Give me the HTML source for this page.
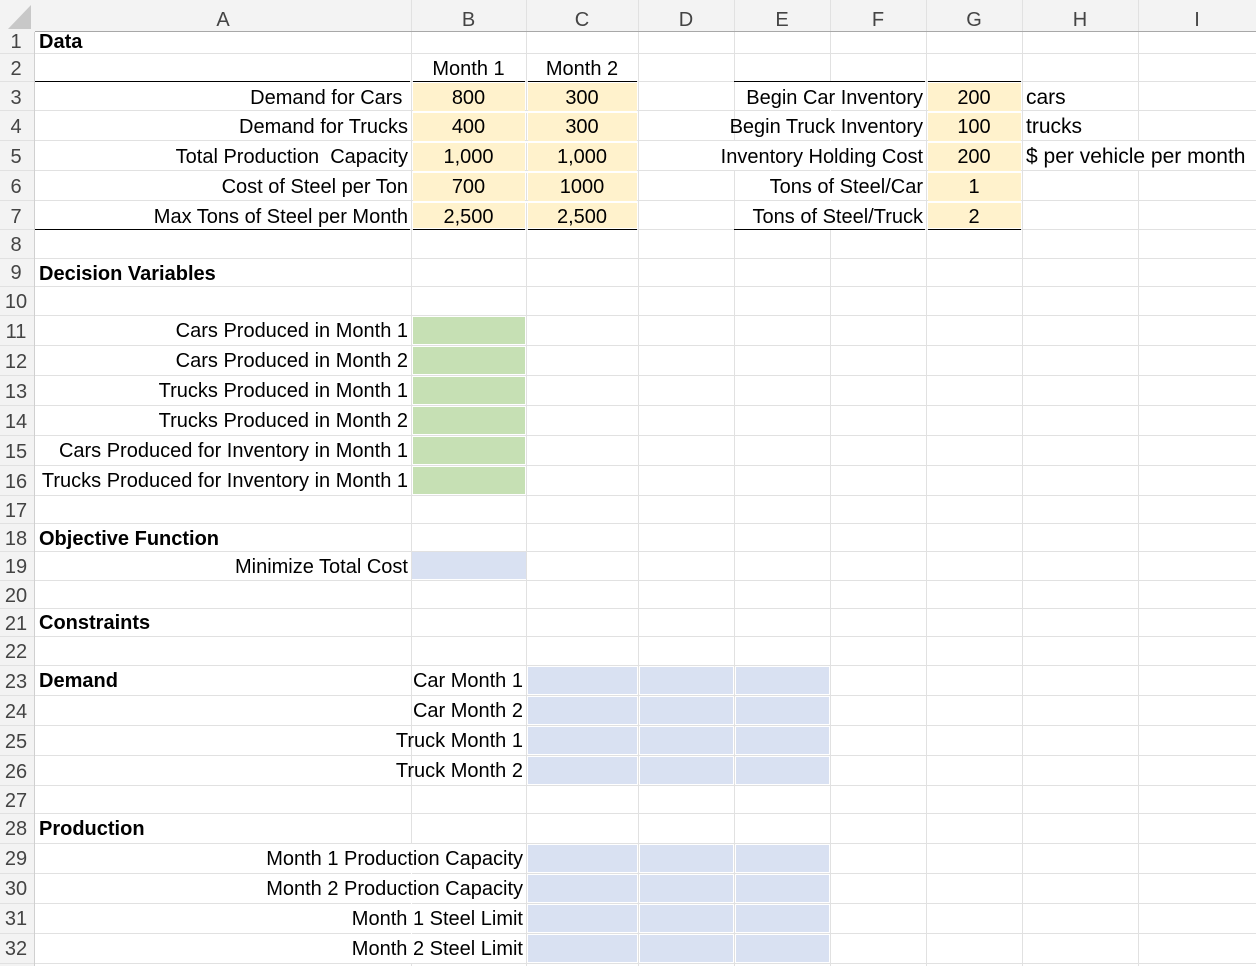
<!DOCTYPE html>
<html><head><meta charset="utf-8"><style>
*{margin:0;padding:0;box-sizing:border-box}
body{width:1256px;height:966px;overflow:hidden;background:#fff;font-family:"Liberation Sans",Arial,sans-serif;font-size:20px;color:#000;position:relative}
.c{position:absolute;white-space:nowrap;overflow:visible;padding-top:2px}
.r{text-align:right;padding-right:3px}
.m{text-align:center}
.l{padding-left:4px}
.b{font-weight:bold}
.f{position:absolute}
.y{background:#FFF2CC}.g{background:#C6E0B4}.u{background:#D9E1F2}
.k{position:absolute;height:1px;background:#000}
.w{position:absolute;width:1px;background:#fff}
.hd{position:absolute;color:#444;text-align:center;font-size:20px}
</style></head><body>
<svg width="1256" height="966" style="position:absolute;left:0;top:0">
<rect x="0" y="0" width="1256" height="32" fill="#F3F3F3"/>
<rect x="0" y="0" width="35" height="966" fill="#F3F3F3"/>
<polygon points="31,5 31,29 8,29" fill="#C8C8C8"/>
<g stroke="#E1E1E1" stroke-width="1">
<line x1="411.5" y1="0" x2="411.5" y2="966"/><line x1="526.5" y1="0" x2="526.5" y2="966"/><line x1="638.5" y1="0" x2="638.5" y2="966"/><line x1="734.5" y1="0" x2="734.5" y2="966"/><line x1="830.5" y1="0" x2="830.5" y2="966"/><line x1="926.5" y1="0" x2="926.5" y2="966"/><line x1="1022.5" y1="0" x2="1022.5" y2="966"/><line x1="1138.5" y1="0" x2="1138.5" y2="966"/>
<line x1="0" y1="53.5" x2="1256" y2="53.5"/><line x1="0" y1="81.5" x2="1256" y2="81.5"/><line x1="0" y1="110.5" x2="1256" y2="110.5"/><line x1="0" y1="140.5" x2="1256" y2="140.5"/><line x1="0" y1="170.5" x2="1256" y2="170.5"/><line x1="0" y1="200.5" x2="1256" y2="200.5"/><line x1="0" y1="229.5" x2="1256" y2="229.5"/><line x1="0" y1="258.5" x2="1256" y2="258.5"/><line x1="0" y1="286.5" x2="1256" y2="286.5"/><line x1="0" y1="315.5" x2="1256" y2="315.5"/><line x1="0" y1="345.5" x2="1256" y2="345.5"/><line x1="0" y1="375.5" x2="1256" y2="375.5"/><line x1="0" y1="405.5" x2="1256" y2="405.5"/><line x1="0" y1="435.5" x2="1256" y2="435.5"/><line x1="0" y1="465.5" x2="1256" y2="465.5"/><line x1="0" y1="495.5" x2="1256" y2="495.5"/><line x1="0" y1="523.5" x2="1256" y2="523.5"/><line x1="0" y1="551.5" x2="1256" y2="551.5"/><line x1="0" y1="580.5" x2="1256" y2="580.5"/><line x1="0" y1="608.5" x2="1256" y2="608.5"/><line x1="0" y1="636.5" x2="1256" y2="636.5"/><line x1="0" y1="665.5" x2="1256" y2="665.5"/><line x1="0" y1="695.5" x2="1256" y2="695.5"/><line x1="0" y1="725.5" x2="1256" y2="725.5"/><line x1="0" y1="755.5" x2="1256" y2="755.5"/><line x1="0" y1="785.5" x2="1256" y2="785.5"/><line x1="0" y1="813.5" x2="1256" y2="813.5"/><line x1="0" y1="843.5" x2="1256" y2="843.5"/><line x1="0" y1="873.5" x2="1256" y2="873.5"/><line x1="0" y1="903.5" x2="1256" y2="903.5"/><line x1="0" y1="933.5" x2="1256" y2="933.5"/><line x1="0" y1="963.5" x2="1256" y2="963.5"/>
</g>
<line x1="35" y1="31.5" x2="1256" y2="31.5" stroke="#A8A8A8"/>
<line x1="34.5" y1="32" x2="34.5" y2="966" stroke="#D0D0D0"/>
</svg>
<!-- gridline covers for overflowing text -->
<div class="w" style="left:830px;top:82px;height:147px"></div>
<div class="w" style="left:734px;top:141px;height:29px"></div>
<div class="w" style="left:1138px;top:141px;height:29px"></div>
<div class="w" style="left:411px;top:844px;height:119px"></div>
<!-- headers -->
<div class="hd" style="left:35px;width:376px;top:9px">A</div>
<div class="hd" style="left:411px;width:115px;top:9px">B</div>
<div class="hd" style="left:526px;width:112px;top:9px">C</div>
<div class="hd" style="left:638px;width:96px;top:9px">D</div>
<div class="hd" style="left:734px;width:96px;top:9px">E</div>
<div class="hd" style="left:830px;width:96px;top:9px">F</div>
<div class="hd" style="left:926px;width:96px;top:9px">G</div>
<div class="hd" style="left:1022px;width:116px;top:9px">H</div>
<div class="hd" style="left:1138px;width:118px;top:9px">I</div>
<div class="hd" style="left:0;width:32px;top:31px">1</div>
<div class="hd" style="left:0;width:32px;top:58px">2</div>
<div class="hd" style="left:0;width:32px;top:87px">3</div>
<div class="hd" style="left:0;width:32px;top:116px">4</div>
<div class="hd" style="left:0;width:32px;top:146px">5</div>
<div class="hd" style="left:0;width:32px;top:176px">6</div>
<div class="hd" style="left:0;width:32px;top:206px">7</div>
<div class="hd" style="left:0;width:32px;top:234px">8</div>
<div class="hd" style="left:0;width:32px;top:262px">9</div>
<div class="hd" style="left:0;width:32px;top:291px">10</div>
<div class="hd" style="left:0;width:32px;top:321px">11</div>
<div class="hd" style="left:0;width:32px;top:351px">12</div>
<div class="hd" style="left:0;width:32px;top:381px">13</div>
<div class="hd" style="left:0;width:32px;top:411px">14</div>
<div class="hd" style="left:0;width:32px;top:441px">15</div>
<div class="hd" style="left:0;width:32px;top:471px">16</div>
<div class="hd" style="left:0;width:32px;top:500px">17</div>
<div class="hd" style="left:0;width:32px;top:528px">18</div>
<div class="hd" style="left:0;width:32px;top:556px">19</div>
<div class="hd" style="left:0;width:32px;top:585px">20</div>
<div class="hd" style="left:0;width:32px;top:613px">21</div>
<div class="hd" style="left:0;width:32px;top:641px">22</div>
<div class="hd" style="left:0;width:32px;top:671px">23</div>
<div class="hd" style="left:0;width:32px;top:701px">24</div>
<div class="hd" style="left:0;width:32px;top:731px">25</div>
<div class="hd" style="left:0;width:32px;top:761px">26</div>
<div class="hd" style="left:0;width:32px;top:790px">27</div>
<div class="hd" style="left:0;width:32px;top:818px">28</div>
<div class="hd" style="left:0;width:32px;top:848px">29</div>
<div class="hd" style="left:0;width:32px;top:878px">30</div>
<div class="hd" style="left:0;width:32px;top:908px">31</div>
<div class="hd" style="left:0;width:32px;top:938px">32</div>
<!-- fills -->
<div class="f y" style="left:413px;top:83px;width:112px;height:145px"></div>
<div class="f y" style="left:528px;top:83px;width:109px;height:145px"></div>
<div class="f y" style="left:928px;top:83px;width:93px;height:145px"></div>
<div class="f" style="left:413px;top:111px;width:224px;height:2px;background:#fff"></div>
<div class="f" style="left:413px;top:141px;width:224px;height:2px;background:#fff"></div>
<div class="f" style="left:413px;top:171px;width:224px;height:2px;background:#fff"></div>
<div class="f" style="left:413px;top:201px;width:224px;height:2px;background:#fff"></div>
<div class="f" style="left:928px;top:111px;width:93px;height:2px;background:#fff"></div>
<div class="f" style="left:928px;top:141px;width:93px;height:2px;background:#fff"></div>
<div class="f" style="left:928px;top:171px;width:93px;height:2px;background:#fff"></div>
<div class="f" style="left:928px;top:201px;width:93px;height:2px;background:#fff"></div>
<div class="f g" style="left:413px;top:317px;width:112px;height:27px"></div>
<div class="f g" style="left:413px;top:347px;width:112px;height:27px"></div>
<div class="f g" style="left:413px;top:377px;width:112px;height:27px"></div>
<div class="f g" style="left:413px;top:407px;width:112px;height:27px"></div>
<div class="f g" style="left:413px;top:437px;width:112px;height:27px"></div>
<div class="f g" style="left:413px;top:467px;width:112px;height:27px"></div>
<div class="f u" style="left:412px;top:552px;width:114px;height:27px"></div>
<div class="f u" style="left:528px;top:667px;width:109px;height:27px"></div><div class="f u" style="left:640px;top:667px;width:93px;height:27px"></div><div class="f u" style="left:736px;top:667px;width:93px;height:27px"></div>
<div class="f u" style="left:528px;top:697px;width:109px;height:27px"></div><div class="f u" style="left:640px;top:697px;width:93px;height:27px"></div><div class="f u" style="left:736px;top:697px;width:93px;height:27px"></div>
<div class="f u" style="left:528px;top:727px;width:109px;height:27px"></div><div class="f u" style="left:640px;top:727px;width:93px;height:27px"></div><div class="f u" style="left:736px;top:727px;width:93px;height:27px"></div>
<div class="f u" style="left:528px;top:757px;width:109px;height:27px"></div><div class="f u" style="left:640px;top:757px;width:93px;height:27px"></div><div class="f u" style="left:736px;top:757px;width:93px;height:27px"></div>
<div class="f u" style="left:528px;top:845px;width:109px;height:27px"></div><div class="f u" style="left:640px;top:845px;width:93px;height:27px"></div><div class="f u" style="left:736px;top:845px;width:93px;height:27px"></div>
<div class="f u" style="left:528px;top:875px;width:109px;height:27px"></div><div class="f u" style="left:640px;top:875px;width:93px;height:27px"></div><div class="f u" style="left:736px;top:875px;width:93px;height:27px"></div>
<div class="f u" style="left:528px;top:905px;width:109px;height:27px"></div><div class="f u" style="left:640px;top:905px;width:93px;height:27px"></div><div class="f u" style="left:736px;top:905px;width:93px;height:27px"></div>
<div class="f u" style="left:528px;top:935px;width:109px;height:27px"></div><div class="f u" style="left:640px;top:935px;width:93px;height:27px"></div><div class="f u" style="left:736px;top:935px;width:93px;height:27px"></div>
<!-- black borders -->
<div class="k" style="left:35px;top:81px;width:375px"></div>
<div class="k" style="left:413px;top:81px;width:112px"></div>
<div class="k" style="left:528px;top:81px;width:109px"></div>
<div class="k" style="left:35px;top:229px;width:375px"></div>
<div class="k" style="left:413px;top:229px;width:112px"></div>
<div class="k" style="left:528px;top:229px;width:109px"></div>
<div class="k" style="left:734px;top:81px;width:191px"></div>
<div class="k" style="left:928px;top:81px;width:93px"></div>
<div class="k" style="left:734px;top:229px;width:191px"></div>
<div class="k" style="left:928px;top:229px;width:93px"></div>
<!-- text -->
<div class="c l b" style="left:35px;top:29px">Data</div>
<div class="c m" style="left:411px;width:115px;top:56px">Month 1</div>
<div class="c m" style="left:526px;width:112px;top:56px">Month 2</div>
<div class="c r" style="left:35px;width:376px;top:85px">Demand for Cars&nbsp;</div>
<div class="c r" style="left:35px;width:376px;top:114px">Demand for Trucks</div>
<div class="c r" style="left:35px;width:376px;top:144px">Total Production&nbsp; Capacity</div>
<div class="c r" style="left:35px;width:376px;top:174px">Cost of Steel per Ton</div>
<div class="c r" style="left:35px;width:376px;top:204px">Max Tons of Steel per Month</div>
<div class="c m" style="left:411px;width:115px;top:85px">800</div>
<div class="c m" style="left:411px;width:115px;top:114px">400</div>
<div class="c m" style="left:411px;width:115px;top:144px">1,000</div>
<div class="c m" style="left:411px;width:115px;top:174px">700</div>
<div class="c m" style="left:411px;width:115px;top:204px">2,500</div>
<div class="c m" style="left:526px;width:112px;top:85px">300</div>
<div class="c m" style="left:526px;width:112px;top:114px">300</div>
<div class="c m" style="left:526px;width:112px;top:144px">1,000</div>
<div class="c m" style="left:526px;width:112px;top:174px">1000</div>
<div class="c m" style="left:526px;width:112px;top:204px">2,500</div>
<div class="c r" style="left:626px;width:300px;top:85px">Begin Car Inventory</div>
<div class="c r" style="left:626px;width:300px;top:114px">Begin Truck Inventory</div>
<div class="c r" style="left:626px;width:300px;top:144px">Inventory Holding Cost</div>
<div class="c r" style="left:626px;width:300px;top:174px">Tons of Steel/Car</div>
<div class="c r" style="left:626px;width:300px;top:204px">Tons of Steel/Truck</div>
<div class="c m" style="left:926px;width:96px;top:85px">200</div>
<div class="c m" style="left:926px;width:96px;top:114px">100</div>
<div class="c m" style="left:926px;width:96px;top:144px">200</div>
<div class="c m" style="left:926px;width:96px;top:174px">1</div>
<div class="c m" style="left:926px;width:96px;top:204px">2</div>
<div class="c l" style="left:1022px;top:84px;font-size:21px">cars</div>
<div class="c l" style="left:1022px;top:113px;font-size:21px">trucks</div>
<div class="c l" style="left:1022px;top:143px;font-size:21px">$ per vehicle per month</div>
<div class="c l b" style="left:35px;top:261px">Decision Variables</div>
<div class="c r" style="left:35px;width:376px;top:318px">Cars Produced in Month 1</div>
<div class="c r" style="left:35px;width:376px;top:348px">Cars Produced in Month 2</div>
<div class="c r" style="left:35px;width:376px;top:378px">Trucks Produced in Month 1</div>
<div class="c r" style="left:35px;width:376px;top:408px">Trucks Produced in Month 2</div>
<div class="c r" style="left:35px;width:376px;top:438px">Cars Produced for Inventory in Month 1</div>
<div class="c r" style="left:35px;width:376px;top:468px">Trucks Produced for Inventory in Month 1</div>
<div class="c l b" style="left:35px;top:526px">Objective Function</div>
<div class="c r" style="left:35px;width:376px;top:554px">Minimize Total Cost</div>
<div class="c l b" style="left:35px;top:610px">Constraints</div>
<div class="c l b" style="left:35px;top:668px">Demand</div>
<div class="c r" style="left:226px;width:300px;top:668px">Car Month 1</div>
<div class="c r" style="left:226px;width:300px;top:698px">Car Month 2</div>
<div class="c r" style="left:226px;width:300px;top:728px">Truck Month 1</div>
<div class="c r" style="left:226px;width:300px;top:758px">Truck Month 2</div>
<div class="c l b" style="left:35px;top:816px">Production</div>
<div class="c r" style="left:126px;width:400px;top:846px">Month 1 Production Capacity</div>
<div class="c r" style="left:126px;width:400px;top:876px">Month 2 Production Capacity</div>
<div class="c r" style="left:126px;width:400px;top:906px">Month 1 Steel Limit</div>
<div class="c r" style="left:126px;width:400px;top:936px">Month 2 Steel Limit</div>
</body></html>
